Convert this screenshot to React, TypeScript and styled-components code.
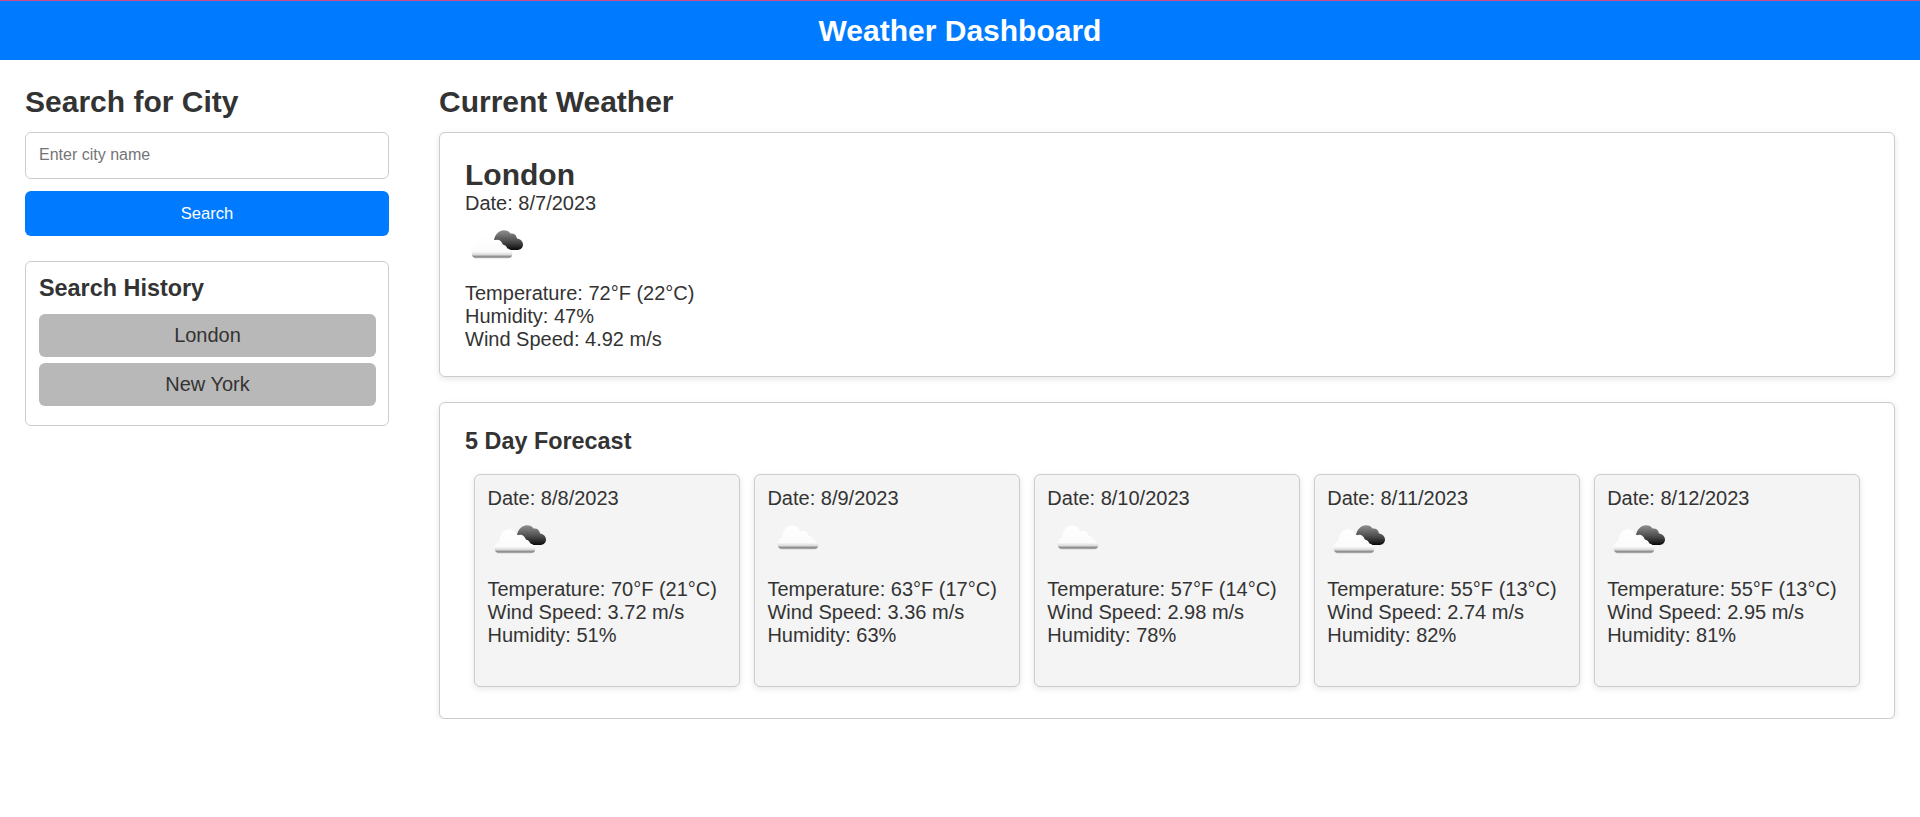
import React from "react";
import styled, { createGlobalStyle } from "styled-components";

const Global = createGlobalStyle`
  html, body { margin: 0; padding: 0; background: #fff; }
  body { font-family: "Liberation Sans", Arial, sans-serif; color: #333; }
`;

const Header = styled.header`
  height: 59px;
  border-top: 1px solid #c9508a;
  background: #007bff;
  color: #fff;
  display: flex;
  align-items: center;
  justify-content: center;
  h1 { margin: 0; font-size: 30px; font-weight: 700; line-height: 59px; }
`;

const Layout = styled.main`
  display: flex;
  gap: 50px;
  padding: 25px 25px 0 25px;
  align-items: flex-start;
`;

const Sidebar = styled.aside`
  width: 364px;
  flex: none;
`;

const Content = styled.section`
  flex: 1;
  min-width: 0;
`;

const PageTitle = styled.h2`
  margin: 0 0 13px;
  font-size: 30px;
  line-height: 34px;
  font-weight: 700;
  color: #333;
`;

const CityInput = styled.input`
  display: block;
  width: 100%;
  box-sizing: border-box;
  height: 47px;
  padding: 0 13px 2px;
  border: 1px solid #ccc;
  border-radius: 6px;
  font-family: inherit;
  font-size: 16px;
  outline: none;
  &::placeholder { color: #757575; opacity: 1; }
`;

const SearchButton = styled.button`
  display: block;
  width: 100%;
  height: 45px;
  margin-top: 12px;
  border: 0;
  border-radius: 6px;
  background: #007bff;
  color: #fff;
  font-family: inherit;
  font-size: 16.6px;
`;

const HistoryBox = styled.div`
  margin-top: 25px;
  padding: 13px 12px 13px 13px;
  border: 1px solid #ccc;
  border-radius: 6px;
  height: 165px;
  box-sizing: border-box;
`;

const HistoryTitle = styled.h3`
  margin: 0 0 13px;
  font-size: 23.4px;
  line-height: 26px;
  font-weight: 700;
`;

const HistoryButton = styled.button`
  display: block;
  width: 100%;
  height: 43px;
  margin-bottom: 6px;
  border: 0;
  border-radius: 6px;
  background: #b8b8b8;
  color: #333;
  font-family: inherit;
  font-size: 20px;
`;

const Card = styled.div`
  box-sizing: border-box;
  border: 1px solid #ccc;
  border-radius: 6px;
  background: #fff;
  padding: 25px;
  box-shadow: 0 2px 6px rgba(0, 0, 0, 0.1);
`;

const CurrentCard = styled(Card)`
  height: 245px;
  margin-bottom: 25px;
`;

const City = styled.h2`
  margin: 0;
  font-size: 30px;
  line-height: 34px;
  font-weight: 700;
`;

const Line = styled.div`
  font-size: 20px;
  line-height: 23px;
`;

const IconSlot = styled.div<{ $after: number }>`
  height: 50px;
  width: 62px;
  margin: 4px 0 ${(p) => p.$after}px;
`;

const ForecastCard = styled(Card)`
  height: 317px;
`;

const ForecastTitle = styled.h3`
  margin: 0 0 20px;
  font-size: 23.4px;
  line-height: 26px;
  font-weight: 700;
`;

const ForecastRow = styled.div`
  display: flex;
  gap: 13.5px;
  padding-left: 9px;
  padding-right: 9px;
`;

const DayCard = styled.div`
  flex: 1;
  box-sizing: border-box;
  height: 213px;
  padding: 12px 13px 12px 12.5px;
  background: #f4f4f4;
  border: 1px solid #ccc;
  border-radius: 6px;
  box-shadow: 0 2px 6px rgba(0, 0, 0, 0.1);
`;

const CloudIcon: React.FC<{ dark?: boolean; id: string }> = ({ dark, id }) => (
  <svg width="62" height="50" viewBox="1 0 62 50" aria-hidden="true">
    <defs>
      <linearGradient id={`${id}w`} x1="0" y1="0" x2="0" y2="1">
        <stop offset="0" stopColor="#fff" />
        <stop offset="0.72" stopColor="#fbfbfb" />
        <stop offset="0.84" stopColor="#dedede" />
        <stop offset="0.93" stopColor="#8c8c8c" />
        <stop offset="1" stopColor="#b5b5b5" />
      </linearGradient>
      <linearGradient id={`${id}d`} x1="0" y1="0" x2="0" y2="1">
        <stop offset="0" stopColor="#8f8f8f" />
        <stop offset="0.6" stopColor="#484848" />
        <stop offset="1" stopColor="#0c0c0c" />
      </linearGradient>
      <filter id={`${id}b`} x="-10%" y="-10%" width="120%" height="120%">
        <feGaussianBlur stdDeviation="0.55" />
      </filter>
    </defs>
    {dark && (
      <g filter={`url(#${id}b)`}>
        <path
          d="M30 21 C31 15 36 11 40 11.3 C43 11.3 45 12.5 46.5 14.5 C50 14 52.5 16 53 19.5 C56.5 20 59 22.5 59 25.5 C59 28.8 56.5 31 53 31 L45 31 C42 31 39 29 38 26 C36 23 33 21 30 21 Z"
          fill={`url(#${id}d)`}
        />
      </g>
    )}
    <g filter={`url(#${id}b)`} transform={dark ? undefined : "translate(4 -4)"}>
      <path
        d="M12 39.3 C9 39.3 7.6 36.5 7.6 33.5 C7.6 30.5 9.5 28.5 12 27.5 C12.8 20 17 15.3 22 15.3 C26 15.3 29 18 30.5 21.5 C33.5 19.5 37.5 21 38.8 25.5 C41 26 42.5 27 43.5 29.5 C46.5 30 48.3 32.5 48.3 35 C48.3 37.8 46.5 39.3 44 39.3 Z"
        fill={`url(#${id}w)`}
      />
    </g>
  </svg>
);

const days = [
  { date: "8/8/2023", temp: "70°F (21°C)", wind: "3.72", hum: "51", dark: true },
  { date: "8/9/2023", temp: "63°F (17°C)", wind: "3.36", hum: "63", dark: false },
  { date: "8/10/2023", temp: "57°F (14°C)", wind: "2.98", hum: "78", dark: false },
  { date: "8/11/2023", temp: "55°F (13°C)", wind: "2.74", hum: "82", dark: true },
  { date: "8/12/2023", temp: "55°F (13°C)", wind: "2.95", hum: "81", dark: true },
];

export default function App() {
  return (
    <>
      <Global />
      <Header>
        <h1>Weather Dashboard</h1>
      </Header>
      <Layout>
        <Sidebar>
          <PageTitle>Search for City</PageTitle>
          <CityInput placeholder="Enter city name" />
          <SearchButton>Search</SearchButton>
          <HistoryBox>
            <HistoryTitle>Search History</HistoryTitle>
            <HistoryButton>London</HistoryButton>
            <HistoryButton>New York</HistoryButton>
          </HistoryBox>
        </Sidebar>
        <Content>
          <PageTitle>Current Weather</PageTitle>
          <CurrentCard>
            <City>London</City>
            <Line>Date: 8/7/2023</Line>
            <IconSlot $after={13}>
              <CloudIcon dark id="cur" />
            </IconSlot>
            <Line>Temperature: 72°F (22°C)</Line>
            <Line>Humidity: 47%</Line>
            <Line>Wind Speed: 4.92 m/s</Line>
          </CurrentCard>
          <ForecastCard>
            <ForecastTitle>5 Day Forecast</ForecastTitle>
            <ForecastRow>
              {days.map((d, i) => (
                <DayCard key={d.date}>
                  <Line>Date: {d.date}</Line>
                  <IconSlot $after={14}>
                    <CloudIcon dark={d.dark} id={`d${i}`} />
                  </IconSlot>
                  <Line>Temperature: {d.temp}</Line>
                  <Line>Wind Speed: {d.wind} m/s</Line>
                  <Line>Humidity: {d.hum}%</Line>
                </DayCard>
              ))}
            </ForecastRow>
          </ForecastCard>
        </Content>
      </Layout>
    </>
  );
}
